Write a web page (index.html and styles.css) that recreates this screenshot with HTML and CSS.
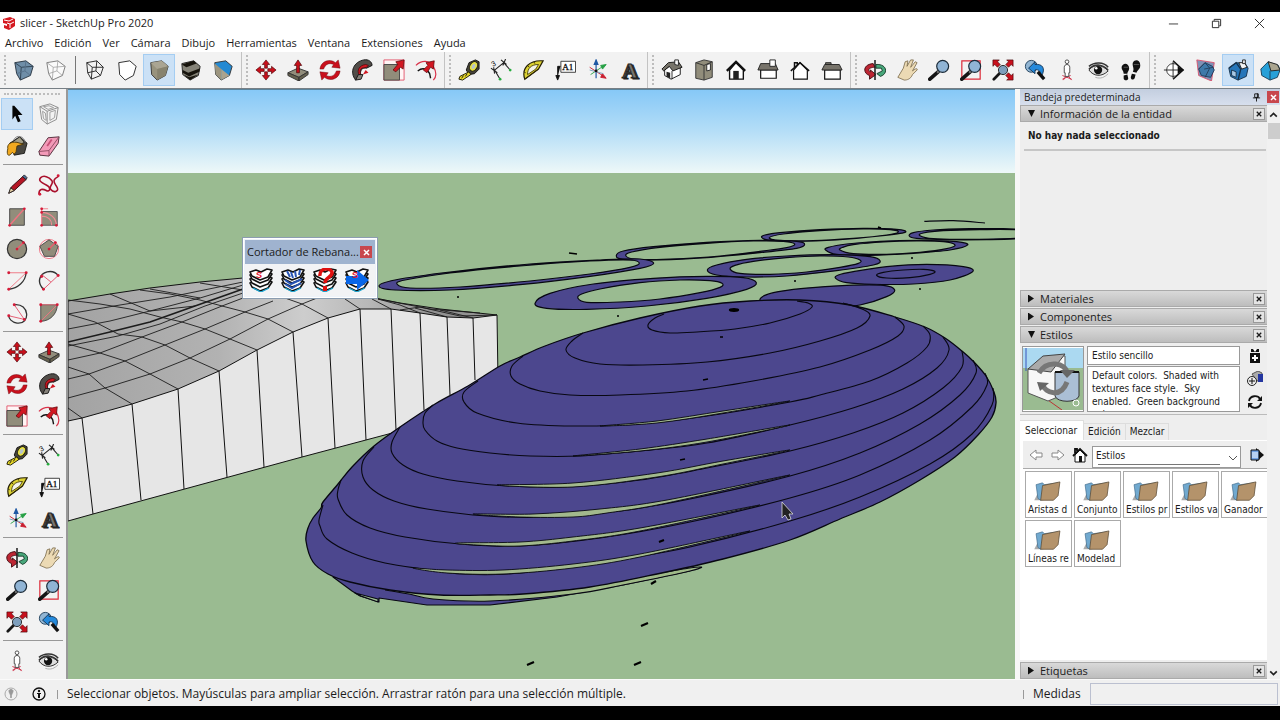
FILE: index.html
```html
<!DOCTYPE html>
<html lang="es">
<head>
<meta charset="utf-8">
<title>slicer - SketchUp Pro 2020</title>
<link rel="stylesheet" href="styles.css">
</head>
<body>
<svg class="defs" aria-hidden="true">
  <defs>
    <linearGradient id="sky" x1="0" y1="0" x2="0" y2="1"><stop offset="0" stop-color="#86c8f7"/><stop offset=".5" stop-color="#b5def7"/><stop offset="1" stop-color="#eef8f8"/></linearGradient>
    <linearGradient id="terrain" x1="0" y1="0" x2="1" y2="0"><stop offset="0" stop-color="#a3a3a3"/><stop offset=".35" stop-color="#b2b2b2"/><stop offset=".55" stop-color="#cdcdcd"/><stop offset=".7" stop-color="#b8b8b8"/><stop offset=".85" stop-color="#929292"/></linearGradient>

    <symbol id="i-xray" viewBox="0 0 24 24"><path d="M2 4l12-2 8 6-3 10-11 5-4-7z" fill="#6f8ea8" stroke="#26323e"/><path d="M2 4l7 5 13-1M9 9l-1 14" fill="none" stroke="#2f4252"/><path d="M14 2l-1 11-9 3M13 13l6 5" fill="none" stroke="#56718a"/></symbol>
    <symbol id="i-back" viewBox="0 0 24 24"><path d="M2 4l12-2 8 6-3 10-11 5-4-7z" fill="#fafafa" stroke="#777"/><path d="M2 4l7 5 13-1M9 9l-1 14M14 2l-1 11-9 3M13 13l6 5" fill="none" stroke="#999" stroke-width=".8"/></symbol>
    <symbol id="i-wire" viewBox="0 0 24 24"><path d="M3 4l11-2 7 7-3 9-10 4-4-7zM3 4l6 5 12 0M9 9l-1 13M14 2l-1 11-9 2M13 13l5 5" fill="none" stroke="#222"/></symbol>
    <symbol id="i-hidden" viewBox="0 0 24 24"><path d="M3 4l12-2 7 6-3 10-9 5-6-6z" fill="#fff" stroke="#222"/></symbol>
    <symbol id="i-shaded" viewBox="0 0 24 24"><path d="M3 4l12-2 7 6-3 10-9 5-6-6z" fill="#98937e" stroke="#333"/><path d="M3 4l12-2 7 6-12 3z" fill="#aaa593"/><path d="M10 11l12-3-3 10-9 5z" fill="#87836f"/></symbol>
    <symbol id="i-textured" viewBox="0 0 24 24"><path d="M2 5l13-3 7 6-2 10-9 5-8-6z" fill="#858378" stroke="#222"/><path d="M2 6l13-4 3 3-11 4zM3 12l6 3 13-5-1 4-11 5-7-4zM4 17l6 3 10-3-9 6z" fill="#17140d"/></symbol>
    <symbol id="i-mono" viewBox="0 0 24 24"><path d="M3 4l12-2 7 6-3 10-9 5-6-6z" fill="#2389d2" stroke="#333"/><path d="M3 5l7 6 0 12-6-6z" fill="#9c957f"/><path d="M10 11l9 7-9 5z" fill="#aaa38e"/></symbol>
    <symbol id="i-move" viewBox="0 0 24 24"><g fill="#c9101c" stroke="#4d0508" stroke-width=".7"><path id="mv" d="M12 1l4 5h-2.500v4h-3V6H8z"/><use href="#mv" transform="rotate(90 12 12)"/><use href="#mv" transform="rotate(180 12 12)"/><use href="#mv" transform="rotate(270 12 12)"/></g></symbol>
    <symbol id="i-push" viewBox="0 0 24 24"><path d="M1 15l11-5 11 4-10 6z" fill="#918d7b" stroke="#333"/><path d="M1 15v3l12 6v-4zM13 20l10-6v3l-10 7z" fill="#66624f" stroke="#333"/><path d="M12 1l4 6h-2.500v8h-3V7H8z" fill="#c9101c" stroke="#4d0508" stroke-width=".8"/></symbol>
    <symbol id="i-rotate" viewBox="0 0 24 24"><g fill="#c9101c" stroke="#6d0710" stroke-width=".5"><path id="rt" d="M1 11C2 2 12-1 18 4l3-3 2 9-9-1 2-3C12 4 7 5 5 11z"/><use href="#rt" transform="rotate(180 12 12)"/></g></symbol>
    <symbol id="i-follow" viewBox="0 0 24 24"><path d="M5 23C-2 14 3 3 14 1c5-1 9 2 9 6l-6 3c-5-1-8 3-6 8z" fill="#514d49" stroke="#111"/><path d="M9 18c-3-6 0-11 7-12l3 1-2 2-5 1c-3 2-2 5-1 8z" fill="#d11722" stroke="#4d0508" stroke-width=".8"/><path d="M16 12l3 3-6 2z" fill="#d11722"/><path d="M5 23l6-1 2-5-5 0z" fill="#85817a" stroke="#111"/></symbol>
    <symbol id="i-scale" viewBox="0 0 24 24"><path d="M1 1h22v22H1z" fill="#fff5f5" stroke="#e3536a"/><path d="M1 6h17v17H1z" fill="#918d7b" stroke="#444"/><path d="M11 12l5-6-2-3 9-2-1 10-3-2-5 5z" fill="#d11722" stroke="#5d0508" stroke-width=".8"/></symbol>
    <symbol id="i-offset" viewBox="0 0 24 24"><path d="M1 7C7 1 16 1 20 8s3 12 0 15" fill="none" stroke="#d9344b" stroke-width="1.300"/><path d="M3 13c5-4 10-3 13 3l1 5" fill="none" stroke="#111" stroke-width="1.500"/><path d="M9 12l5-5-2-3 9-2-1 9-3-2-4 6z" fill="#d11722" stroke="#5d0508" stroke-width=".8"/></symbol>
    <symbol id="i-tape" viewBox="0 0 24 24"><path d="M9 12l3-8 7-3 4 2v8l-5 5-6 1z" fill="#45423a" stroke="#111"/><ellipse cx="17" cy="8" rx="4" ry="5.500" transform="rotate(28 17 8)" fill="#e7e043" stroke="#24210a"/><ellipse cx="17" cy="8" rx="1.800" ry="3" transform="rotate(28 17 8)" fill="#b7c3cb"/><path d="M2 19l10-5 2 3-9 6-4-1z" fill="#e9d927" stroke="#181600"/><path d="M4 21l2-3M8 19l2-3" stroke="#111"/></symbol>
    <symbol id="i-dim" viewBox="0 0 24 24"><path d="M4 13L15 4M5 12l6 10M15 4l7 8M1 10l7 5M5 16l-1-7M12 1l6 5M17 0l-3 7" fill="none" stroke="#222" stroke-width="1.200"/><circle cx="11" cy="22" r="1.500" fill="#27ad3f"/><circle cx="22" cy="12" r="1.500" fill="#27ad3f"/><text x="2" y="8" class="dim-text" transform="rotate(-30 4 6)">3</text></symbol>
    <symbol id="i-protractor" viewBox="0 0 24 24"><path d="M3 22C-1 10 8 1 23 2L18 11z" fill="#dcd232" stroke="#251f05" stroke-width="1.300"/><path d="M6 17C6 10 10 6 18 6l-3 5z" fill="#f3f3ec" stroke="#4b4309"/><path d="M3 22l15-11M2 14l2 1M6 7l2 2M13 3l1 2" stroke="#322b07"/></symbol>
    <symbol id="i-text" viewBox="0 0 24 24"><path d="M7.500 2.500h16v12h-16z" fill="#fff" stroke="#333"/><path d="M7 8H4v11M2 18l2 5 2-5z" fill="#111" stroke="#111"/><text x="9" y="12" class="a1-text">A1</text></symbol>
    <symbol id="i-axes" viewBox="0 0 24 24"><path d="M11 21V5M9 6l2-5 2 5z" fill="#1f58a4" stroke="#1f58a4" stroke-width="1.300"/><path d="M5 17l12-8M16 7l6-1-4 5z" fill="#25a044" stroke="#25a044"/><path d="M4 9l14 9M18 16l4 5-6-1z" fill="#c91e2f" stroke="#c91e2f"/><path d="M4 12l15 4" stroke="#78a0bc"/><circle cx="11" cy="13" r="1.500" fill="#111"/></symbol>
    <symbol id="i-3d" viewBox="0 0 24 24"><text x="6" y="22" class="solid-back">A</text><text x="4" y="21" class="solid-front">A</text></symbol>
    <symbol id="i-iso" viewBox="0 0 24 24"><path d="M4 12l9-7 8 4v8l-10 5-7-4z" fill="#fff" stroke="#111"/><path d="M1 11l7-7 11-1 4 6-10 4-4-5-6 5z" fill="#77746a" stroke="#111"/><path d="M6 14l4 1v6l-4-2z" fill="#222"/><path d="M15 1h4v6l-4-1z" fill="#f9f9f9" stroke="#222"/><path d="M12 13v9" stroke="#222"/></symbol>
    <symbol id="i-top" viewBox="0 0 24 24"><path d="M3 4l9-3 9 2v17l-9 3-9-2z" fill="#918d7b" stroke="#333"/><path d="M3 4l9 3 9-4M12 7v16" fill="none" stroke="#333"/><path d="M15 6l4-1v7l-4 1z" fill="#fff" stroke="#222"/></symbol>
    <symbol id="i-front" viewBox="0 0 24 24"><path d="M5 12v10h15V12l-8-8z" fill="#fff" stroke="#111" stroke-width="1.500"/><path d="M2 13L12 3l10 10" fill="none" stroke="#111" stroke-width="2.500"/><path d="M9 13h6v9H9z" fill="#222"/></symbol>
    <symbol id="i-right" viewBox="0 0 24 24"><path d="M4 12h17v9H4z" fill="#fff" stroke="#111" stroke-width="1.300"/><path d="M1 12l3-7h16l3 7z" fill="#77736a" stroke="#222"/><path d="M14 1h6v7h-6z" fill="#fff" stroke="#222"/></symbol>
    <symbol id="i-rear" viewBox="0 0 24 24"><path d="M5 12v10h15V12l-8-8z" fill="#fff" stroke="#111" stroke-width="1.300"/><path d="M2 13L12 4l10 9M6 9V4h3v2" fill="none" stroke="#111" stroke-width="1.600"/></symbol>
    <symbol id="i-left" viewBox="0 0 24 24"><path d="M4 12h17v10H4z" fill="#fff" stroke="#111" stroke-width="1.300"/><path d="M1 12l3-6h16l3 6zM5 6V4h6v2" fill="#77736a" stroke="#222"/></symbol>
    <symbol id="i-orbit" viewBox="0 0 24 24"><path d="M13 6c12-1 14 10 5 13l-4-3 6-3-1-3-6 0z" fill="#48a77b" stroke="#153d2a"/><path d="M10 5C-2 6-1 16 6 18v4l7-5-6-5v2c-4-2-1-5 5-5z" fill="#bd2633" stroke="#430c12"/><path d="M12 1v22" stroke="#222" stroke-width="1.700"/></symbol>
    <symbol id="i-pan" viewBox="0 0 24 24"><path d="M2 20l6-10 2-7 3-1-1 6 4-7 3 0-3 8 5-6 2 1-5 9c3-3 6-3 5-1l-5 5c-2 5-6 6-9 6z" fill="#ecdab4" stroke="#7c6c4c" stroke-width=".9"/></symbol>
    <symbol id="i-zoom" viewBox="0 0 24 24"><path d="M2 22l9-8" stroke="#151515" stroke-width="4" stroke-linecap="round"/><path d="M10 15l3-3" stroke="#777" stroke-width="2"/><circle cx="16" cy="8" r="6.500" fill="#90b4d5" stroke="#1b2b39" stroke-width="1.300"/></symbol>
    <symbol id="i-window" viewBox="0 0 24 24"><path d="M2 2h20v20H2z" fill="none" stroke="#dc2a38" stroke-width="1.300"/><use href="#i-zoom" width="24" height="24"/></symbol>
    <symbol id="i-extents" viewBox="0 0 24 24"><path d="M2 22l8-8" stroke="#151515" stroke-width="3" stroke-linecap="round"/><circle cx="12" cy="12" r="5" fill="#7e9fbd" stroke="#222"/><g fill="#c9101c" stroke="#430508" stroke-width=".7"><path id="ext" d="M1 1h7L6 3l3 3-3 3-3-3-2 2z"/><use href="#ext" transform="rotate(90 12 12)"/><use href="#ext" transform="rotate(180 12 12)"/></g></symbol>
    <symbol id="i-previous" viewBox="0 0 24 24"><circle cx="8" cy="8" r="6.500" fill="#91b5d3" stroke="#21415c"/><path d="M5 10l7-7v3c8-1 12 4 7 13-1-6-3-8-7-7v4z" fill="#2489db" stroke="#153554"/><path d="M15 14l7 8" stroke="#111" stroke-width="3.500"/></symbol>
    <symbol id="i-camera" viewBox="0 0 24 24"><path d="M8 23l4-6 5 6M7 18l10 4M16 18l-9 4" fill="none" stroke="#cf3048"/><circle cx="12" cy="3" r="2" fill="#fff" stroke="#444"/><path d="M9 9c0-4 6-4 6 0v6h-1v4h-4v-4H9z" fill="#fff" stroke="#444"/></symbol>
    <symbol id="i-look" viewBox="0 0 24 24"><path d="M1 12C6 5 16 6 22 13c-7 7-16 6-21-1z" fill="#ddd" stroke="#222"/><path d="M1 8C7 3 17 3 22 9M1 11c6-6 14-6 21 1" fill="none" stroke="#333" stroke-width="1.600"/><circle cx="11" cy="12" r="4.500" fill="#111"/><circle cx="9" cy="10" r="1.400" fill="#fff"/><path d="M8 20c6 2 10 0 14-4" fill="none" stroke="#aaa"/></symbol>
    <symbol id="i-walk" viewBox="0 0 24 24"><g fill="#111"><path d="M2 8c2-5 8-3 8 2 0 3-2 4-2 6H4c0-4-3-4-2-8zM4 18l4-1 1 4c0 3-5 3-5 0zM14 4c3-5 9-2 8 4 0 3-3 4-4 7l-4-1c2-4-1-6 0-10zM13 16l4 1-1 4c-2 3-5 1-4-2z"/></g><path d="M4 9h5M15 6h6" stroke="#555"/></symbol>
    <symbol id="i-section" viewBox="0 0 24 24"><circle cx="11" cy="12" r="7" fill="#fff" stroke="#333"/><path d="M1 12h20M11 3v18" stroke="#222"/><path d="M11 2l11 10-11 10" fill="none" stroke="#111" stroke-width="1.500"/><path d="M16 8l7 4-7 4z" fill="#111"/></symbol>
    <symbol id="i-plane" viewBox="0 0 24 24"><path d="M2 1l19 3-3 20-14-6z" fill="#7f91b5" stroke="#da526c"/><path d="M4 11l7-7 8 4 2 4-4 8-10-2z" fill="#3f79a9" stroke="#213b5a"/><path d="M4 11l7-7 5 6-5 10M10 11l10-2" fill="none" stroke="#243f5c"/></symbol>
    <symbol id="i-cuts" viewBox="0 0 24 24"><path d="M2 10l8-6 10 1 3 5-2 9-9 4-8-4z" fill="#2676b9" stroke="#17324b"/><path d="M13 4h6l3 5-6 2z" fill="#f4f4f4" stroke="#222"/><path d="M5 12l5 2v6l-5-2z" fill="#a9c9e5" stroke="#17324b"/><path d="M2 10l8-6 5 7-3 12" fill="none" stroke="#17324b" stroke-width="1.500"/><path d="M17 1h3v4h-3z" fill="#eee" stroke="#222"/></symbol>
    <symbol id="i-fill" viewBox="0 0 24 24"><path d="M2 11l8-8 11 4 2 5-3 8-8 3-9-5z" fill="#27a0d8" stroke="#173d56"/><path d="M10 3l10 3 3 6-10 1z" fill="#aaa58f" stroke="#222"/><path d="M12 13v10" stroke="#173d56"/></symbol>

    <symbol id="i-select" viewBox="0 0 24 24"><path d="M9 3l9 10h-5l3 7-3 1-3-7-3 4V3z" fill="#050505"/></symbol>
    <symbol id="i-component" viewBox="0 0 24 24"><path d="M2 4l11-3 9 4-2 13-10 5-6-5zM2 4l8 5 12-4M10 9v14" fill="none" stroke="#888"/><path d="M5 9l3 2 1 8-3-2zM13 10l6-2-1 8-5 3z" fill="none" stroke="#999"/><path d="M6 4l6-1 5 2-6 2z" fill="none" stroke="#999"/></symbol>
    <symbol id="i-paint" viewBox="0 0 24 24"><path d="M4 9L15 2l8 7-3 11-11 2z" fill="#494741" stroke="#181815"/><path d="M5 9l10-7 5 6-9 5z" fill="#a19d88" stroke="#222"/><path d="M2 15c-1-5 3-8 10-7l7 2-7 2-1 6c-1 3-3 3-4 1l-3 3c-3 1-3-4-2-7z" fill="#f1a91f" stroke="#4d390c"/><path d="M8 6c4-8 12-4 13 2" fill="none" stroke="#777"/></symbol>
    <symbol id="i-eraser" viewBox="0 0 24 24"><path d="M1 18L11 3l12-1-1 7-10 14-10-1z" fill="#f39ab8" stroke="#4d2835"/><path d="M1 18l11-1L23 2M12 17v6" fill="none" stroke="#8b4b61"/><path d="M10 12l5-7" stroke="#c75077" stroke-width="2"/></symbol>
    <symbol id="i-pencil" viewBox="0 0 24 24"><path d="M3 21l3-7L18 3l4 3L9 18z" fill="#b51625" stroke="#30080c"/><path d="M18 3l2-2 3 3-1 2z" fill="#5373a2" stroke="#222"/><path d="M3 21l2-6 4 3z" fill="#e6d0a5" stroke="#222"/></symbol>
    <symbol id="i-free" viewBox="0 0 24 24"><path d="M1 22c0-6 4-6 8-4s6-3 0-6S0 7 3 4s9-1 12 3-4 6-1 10 9 2 7-2-5-6-3-9 4-2 4-4" fill="none" stroke="#a9102c" stroke-width="1.700"/><circle cx="2" cy="22" r="1.600" fill="#d41b39"/><circle cx="22" cy="2" r="1.600" fill="#d41b39"/></symbol>
    <symbol id="i-rect" viewBox="0 0 24 24"><path d="M4 3h16v18H4z" fill="#918d7b" stroke="#444"/><path d="M4 21L20 3" stroke="#ef7380" stroke-width="1.500"/><circle cx="4" cy="21" r="1.500" fill="#d41b39"/><circle cx="20" cy="3" r="1.500" fill="#d41b39"/></symbol>
    <symbol id="i-rrect" viewBox="0 0 24 24"><path d="M4 6h17v15H4z" fill="#918d7b" stroke="#555"/><path d="M4 2v19M4 3h7M4 7c9 0 16 6 16 14M4 11c7 0 11 4 11 10" fill="none" stroke="#f28994" stroke-width="1.300"/><g fill="#d41b39"><circle cx="4" cy="3" r="1.500"/><circle cx="4" cy="7" r="1.500"/><circle cx="4" cy="21" r="1.500"/><circle cx="20" cy="21" r="1.500"/></g></symbol>
    <symbol id="i-circle" viewBox="0 0 24 24"><circle cx="12" cy="12" r="10.500" fill="#918d7b" stroke="#333" stroke-width="1.300"/><path d="M12 12l7-7" stroke="#e95f6d" stroke-width="1.500"/><circle cx="12" cy="12" r="1.500" fill="#d41b39"/><circle cx="19" cy="5" r="1.500" fill="#d41b39"/></symbol>
    <symbol id="i-poly" viewBox="0 0 24 24"><circle cx="12" cy="12" r="10.500" fill="#fff5f5" stroke="#ec7180"/><path d="M12 2l10 7-4 11H7L2 9z" fill="#918d7b" stroke="#444"/><path d="M12 12l7-7" stroke="#e95f6d" stroke-width="1.500"/><circle cx="12" cy="12" r="1.500" fill="#d41b39"/><circle cx="19" cy="5" r="1.500" fill="#d41b39"/></symbol>
    <symbol id="i-arc" viewBox="0 0 24 24"><path d="M22 3c-1 10-9 17-19 18" fill="none" stroke="#333" stroke-width="1.400"/><path d="M3 3h19L3 21" fill="none" stroke="#ef7380"/><g fill="#d41b39"><circle cx="3" cy="3" r="1.600"/><circle cx="22" cy="3" r="1.600"/><circle cx="3" cy="21" r="1.600"/></g></symbol>
    <symbol id="i-arc2" viewBox="0 0 24 24"><path d="M6 21C-2 13 2 4 10 2c5-1 9 0 12 4" fill="none" stroke="#333" stroke-width="1.500"/><path d="M6 21L22 6M4 5l10 8" fill="none" stroke="#e3536a"/><g fill="#d41b39"><circle cx="4" cy="7" r="1.600"/><circle cx="22" cy="6" r="1.600"/><circle cx="6" cy="21" r="1.600"/></g></symbol>
    <symbol id="i-arc3" viewBox="0 0 24 24"><path d="M9 3c17-2 18 22 3 20C6 22 3 18 3 15" fill="none" stroke="#333" stroke-width="1.400"/><path d="M9 3l11 16L3 15" fill="none" stroke="#e3536a"/><g fill="#d41b39"><circle cx="9" cy="3" r="1.600"/><circle cx="20" cy="19" r="1.600"/><circle cx="3" cy="15" r="1.600"/></g></symbol>
    <symbol id="i-pie" viewBox="0 0 24 24"><path d="M3 3h18c0 10-8 18-18 18z" fill="#918d7b" stroke="#444"/><path d="M3 3h18L3 21" fill="none" stroke="#ef7380"/><g fill="#d41b39"><circle cx="3" cy="3" r="1.600"/><circle cx="21" cy="3" r="1.600"/><circle cx="3" cy="21" r="1.600"/></g></symbol>

    <symbol id="stack" viewBox="0 0 24 24"><g fill="#fff" stroke="#111" stroke-width="1.600" stroke-linejoin="round"><path id="sheet" d="M1 15l6-2 5 2 6-3 5 2-4 6-8 3-8-4z"/><use href="#sheet" y="-4"/><use href="#sheet" y="-8"/><path d="M1 4l6-2 5 2 6-3 5 1-4 7-8 3-8-4z"/></g><path d="M4 20l8 4 8-4" stroke="#1ca7d3" stroke-width="1.300" fill="none"/></symbol>
    <symbol id="folder" viewBox="0 0 30 24"><path d="M0 21l4-8 6 8z" fill="#aaa"/><path d="M2 4l7-2 2 2 15-2v5L7 21l-3-2z" fill="#71a9cf" stroke="#3b6687" stroke-width=".7"/><path d="M9 5l19-4-2 15-5 5H7z" fill="#b4936b" stroke="#594933" stroke-width=".8"/></symbol>
    <symbol id="close" viewBox="0 0 9 9"><path d="M2 2l5 5M7 2L2 7" fill="none" stroke="currentColor" stroke-width="1.500"/></symbol>
  </defs>
</svg>

<div class="window">
  <header class="titlebar">
    <svg class="app-logo" viewBox="0 0 14 14"><path d="M1 3l7-2 5 2v7l-6 4-5-2V9l3 1V8L1 7z" fill="#d51920"/><path d="M2 4l5 1 4-2M5 7l3 1v4M8 8l4-2" fill="none" stroke="#fff"/></svg>
    <h1 class="title">slicer - SketchUp Pro 2020</h1>
    <div class="window-controls">
      <button aria-label="Minimizar"><svg viewBox="0 0 12 12"><path d="M1 6.500h10" stroke="#333"/></svg></button>
      <button aria-label="Restaurar"><svg viewBox="0 0 12 12"><path d="M1.500 3.500h7v7h-7zM3.500 3V1.500h7v7H9" fill="none" stroke="#222"/></svg></button>
      <button aria-label="Cerrar"><svg viewBox="0 0 12 12"><path d="M1 1l10 10M11 1L1 11" stroke="#222"/></svg></button>
    </div>
  </header>
  <nav class="menubar" aria-label="Menú">
    <button>Archivo</button><button>Edición</button><button>Ver</button><button>Cámara</button><button>Dibujo</button><button>Herramientas</button><button>Ventana</button><button>Extensiones</button><button>Ayuda</button>
  </nav>

  <div class="toolbar">
    <div class="group">
      <button class="tool" aria-label="Rayos X"><svg><use href="#i-xray"/></svg></button><button class="tool" aria-label="Aristas posteriores"><svg><use href="#i-back"/></svg></button><span class="divider"></span><button class="tool" aria-label="Alámbrico"><svg><use href="#i-wire"/></svg></button><button class="tool" aria-label="Líneas ocultas"><svg><use href="#i-hidden"/></svg></button><button class="tool active" aria-label="Sombreado"><svg><use href="#i-shaded"/></svg></button><button class="tool" aria-label="Texturas"><svg><use href="#i-textured"/></svg></button><button class="tool" aria-label="Monocromo"><svg><use href="#i-mono"/></svg></button>
    </div>
    <div class="group">
      <button class="tool" aria-label="Mover"><svg><use href="#i-move"/></svg></button><button class="tool" aria-label="Empujar"><svg><use href="#i-push"/></svg></button><button class="tool" aria-label="Rotar"><svg><use href="#i-rotate"/></svg></button><button class="tool" aria-label="Sígueme"><svg><use href="#i-follow"/></svg></button><button class="tool" aria-label="Escala"><svg><use href="#i-scale"/></svg></button><button class="tool" aria-label="Equidistancia"><svg><use href="#i-offset"/></svg></button>
    </div>
    <div class="group">
      <button class="tool" aria-label="Medir"><svg><use href="#i-tape"/></svg></button><button class="tool" aria-label="Acotaciones"><svg><use href="#i-dim"/></svg></button><button class="tool" aria-label="Transportador"><svg><use href="#i-protractor"/></svg></button><button class="tool" aria-label="Texto"><svg><use href="#i-text"/></svg></button><button class="tool" aria-label="Ejes"><svg><use href="#i-axes"/></svg></button><button class="tool" aria-label="Texto 3D"><svg><use href="#i-3d"/></svg></button>
    </div>
    <div class="group">
      <button class="tool" aria-label="Isométrica"><svg><use href="#i-iso"/></svg></button><button class="tool" aria-label="Planta"><svg><use href="#i-top"/></svg></button><button class="tool" aria-label="Frontal"><svg><use href="#i-front"/></svg></button><button class="tool" aria-label="Derecha"><svg><use href="#i-right"/></svg></button><button class="tool" aria-label="Posterior"><svg><use href="#i-rear"/></svg></button><button class="tool" aria-label="Izquierda"><svg><use href="#i-left"/></svg></button>
    </div>
    <div class="group">
      <button class="tool" aria-label="Orbitar"><svg><use href="#i-orbit"/></svg></button><button class="tool" aria-label="Desplazar"><svg><use href="#i-pan"/></svg></button><button class="tool" aria-label="Zoom"><svg><use href="#i-zoom"/></svg></button><button class="tool" aria-label="Ventana de zoom"><svg><use href="#i-window"/></svg></button><button class="tool" aria-label="Ver modelo centrado"><svg><use href="#i-extents"/></svg></button><button class="tool" aria-label="Anterior"><svg><use href="#i-previous"/></svg></button><button class="tool" aria-label="Situar cámara"><svg><use href="#i-camera"/></svg></button><button class="tool" aria-label="Girar"><svg><use href="#i-look"/></svg></button><button class="tool" aria-label="Caminar"><svg><use href="#i-walk"/></svg></button>
    </div>
    <div class="group last">
      <button class="tool" aria-label="Plano de sección"><svg><use href="#i-section"/></svg></button><button class="tool" aria-label="Mostrar planos"><svg><use href="#i-plane"/></svg></button><button class="tool active" aria-label="Mostrar cortes"><svg><use href="#i-cuts"/></svg></button><button class="tool" aria-label="Mostrar relleno"><svg><use href="#i-fill"/></svg></button>
    </div>
  </div>

  <div class="workspace">
    <aside class="palette" aria-label="Herramientas">
      <div class="tools">
        <button class="tool active" aria-label="Seleccionar"><svg><use href="#i-select"/></svg></button><button class="tool" aria-label="Crear componente"><svg><use href="#i-component"/></svg></button>
        <button class="tool" aria-label="Pintar"><svg><use href="#i-paint"/></svg></button><button class="tool" aria-label="Borrar"><svg><use href="#i-eraser"/></svg></button>
      </div>
      <div class="tools">
        <button class="tool" aria-label="Línea"><svg><use href="#i-pencil"/></svg></button><button class="tool" aria-label="Mano alzada"><svg><use href="#i-free"/></svg></button>
        <button class="tool" aria-label="Rectángulo"><svg><use href="#i-rect"/></svg></button><button class="tool" aria-label="Rectángulo girado"><svg><use href="#i-rrect"/></svg></button>
        <button class="tool" aria-label="Círculo"><svg><use href="#i-circle"/></svg></button><button class="tool" aria-label="Polígono"><svg><use href="#i-poly"/></svg></button>
        <button class="tool" aria-label="Arco"><svg><use href="#i-arc"/></svg></button><button class="tool" aria-label="Arco por 2 puntos"><svg><use href="#i-arc2"/></svg></button>
        <button class="tool" aria-label="Arco por 3 puntos"><svg><use href="#i-arc3"/></svg></button><button class="tool" aria-label="Sector"><svg><use href="#i-pie"/></svg></button>
      </div>
      <div class="tools">
        <button class="tool" aria-label="Mover"><svg><use href="#i-move"/></svg></button><button class="tool" aria-label="Empujar"><svg><use href="#i-push"/></svg></button>
        <button class="tool" aria-label="Rotar"><svg><use href="#i-rotate"/></svg></button><button class="tool" aria-label="Sígueme"><svg><use href="#i-follow"/></svg></button>
        <button class="tool" aria-label="Escala"><svg><use href="#i-scale"/></svg></button><button class="tool" aria-label="Equidistancia"><svg><use href="#i-offset"/></svg></button>
      </div>
      <div class="tools">
        <button class="tool" aria-label="Medir"><svg><use href="#i-tape"/></svg></button><button class="tool" aria-label="Acotaciones"><svg><use href="#i-dim"/></svg></button>
        <button class="tool" aria-label="Transportador"><svg><use href="#i-protractor"/></svg></button><button class="tool" aria-label="Texto"><svg><use href="#i-text"/></svg></button>
        <button class="tool" aria-label="Ejes"><svg><use href="#i-axes"/></svg></button><button class="tool" aria-label="Texto 3D"><svg><use href="#i-3d"/></svg></button>
      </div>
      <div class="tools">
        <button class="tool" aria-label="Orbitar"><svg><use href="#i-orbit"/></svg></button><button class="tool" aria-label="Desplazar"><svg><use href="#i-pan"/></svg></button>
        <button class="tool" aria-label="Zoom"><svg><use href="#i-zoom"/></svg></button><button class="tool" aria-label="Ventana de zoom"><svg><use href="#i-window"/></svg></button>
        <button class="tool" aria-label="Ver modelo centrado"><svg><use href="#i-extents"/></svg></button><button class="tool" aria-label="Anterior"><svg><use href="#i-previous"/></svg></button>
      </div>
      <div class="tools">
        <button class="tool" aria-label="Situar cámara"><svg><use href="#i-camera"/></svg></button><button class="tool" aria-label="Girar"><svg><use href="#i-look"/></svg></button>
      </div>
    </aside>

    <main class="viewport">
      <svg class="scene" viewBox="68 90 947 589" preserveAspectRatio="xMinYMin slice" role="img" aria-label="Modelo">
        <path d="M0 90h1400v83H0z" fill="url(#sky)"/>
        <path d="M0 173h1400v800H0z" fill="#9abb91"/>
        <g stroke="#111" stroke-linejoin="round">
          <path d="M68 301L110 294 150 288 200 282 243 278 300 285 360 295 400 303 440 309 497 315 473 322 391 316 300 340 220 378 68 425z" fill="url(#terrain)"/>
          <path d="M68 421L82 418 132 404 178 389 219 371 257 350 293 332 328 318 360 309 391 309 420 313 447 317 473 318 497 315 498 380 396 432 302 457 93 514 68 521z" fill="#e6e6e6"/>
          <path d="M82 418L93 514M132 404L141 500M178 389L184 489M219 371L227 477M257 350L264 467M293 332L302 457M328 318L335 448M360 309L366 440M391 309L396 430M420 313L424 410M447 317L450 395M473 318L475 380" fill="none"/>
          <g fill="none" stroke="#1c1c1c" stroke-width=".9">
            <path d="M68 398L105 388 150 374 190 358 230 339 268 319 302 304 317 298"/>
            <path d="M68 379L89 374 125 361 165 345 205 329 245 312 273 301"/>
            <path d="M68 360L100 353 142 337 182 322 222 306 243 298"/>
            <path d="M68 342L110 332 150 322 195 306 243 289" stroke-width="1.600"/>
            <path d="M68 346L118 336 160 324 205 306 243 293M68 329L110 321 150 311 200 298 243 285M68 314L120 305 170 297 243 282"/>
            <path d="M257 350L230 339 205 329 182 322 160 317 130 309 100 304 68 300"/>
            <path d="M219 371L190 358 165 345 142 337 118 334 95 322 68 314"/>
            <path d="M178 389L150 374 125 361 100 353 68 344"/>
            <path d="M132 404L105 388 89 374 68 367M82 418L68 408"/>
            <path d="M293 332L268 319 245 312 222 306 200 300 170 294 140 290"/>
            <path d="M328 318L302 304 285 298M360 309L345 299M391 309L372 299M420 313L400 305 378 299M447 317L415 308M473 318L440 310M378 299L430 309 480 313M400 310L420 307 460 316 497 315"/>
            <path d="M110 294L150 311 195 306M150 289L200 298M200 283L243 290"/>
          </g>
        </g>
        <g id="model"></g>
        <g fill="none" stroke="#000">
          <path d="M569 253l8 1M617 316h2M720 337h3M703 380l5-1M680 460l5-1M457 297h2M794 281h2M911 258h2M919 289h2M878 227l3 1" stroke-width="1.600"/>
          <path d="M659 542l5-2M651 584l5-3M641 626l7-3M634 665l7-3M527 665l7-3" stroke-width="2.200"/>
          <ellipse cx="734" cy="310" rx="4" ry=".7" stroke-width="2.400"/>
        </g>
        <path d="M782 502v16l3-3 3 5 3-1-2-5h4z" fill="#222" stroke="#ddd" stroke-width=".8"/>
      </svg>

      <section class="floating" aria-label="Cortador de Rebanadas">
        <header class="floating-title"><span>Cortador de Rebana...</span><button class="close-red" aria-label="Cerrar"><svg><use href="#close"/></svg></button></header>
        <div class="floating-tools">
          <button class="tool" aria-label="Rebanar"><svg viewBox="0 0 24 24"><use href="#stack"/><text x="7" y="10" class="s-text">S</text></svg></button>
          <button class="tool" aria-label="Rebanar otra vez"><svg viewBox="0 0 24 24"><use href="#stack"/><path d="M6 3l3 6M10 4l2 6M14 3l1 6M19 2l-1 5M4 12l6 4 11-5M4 16l7 4 9-5" fill="none" stroke="#2854b4" stroke-width="2"/></svg></button>
          <button class="tool" aria-label="Ayuda"><svg viewBox="0 0 24 24"><use href="#stack"/><path d="M7 8C6 0 17-1 19 4c1 5-7 5-7 11" fill="none" stroke="#df1010" stroke-width="3.500"/><path d="M10 18h4v5h-4z" fill="#df1010"/></svg></button>
          <button class="tool" aria-label="Exportar"><svg viewBox="0 0 24 24"><use href="#stack"/><path d="M1 8h11V2l12 10-12 10v-6H1z" fill="#0866e8"/><text x="7" y="10" class="s-text">S</text></svg></button>
        </div>
      </section>
    </main>

    <aside class="tray">
      <header class="tray-title"><h2>Bandeja predeterminada</h2><button class="pin" aria-label="Fijar"><svg viewBox="0 0 10 10"><path d="M3 1.500h4v4H3zM6 1v5M1 6h8M5 6v4" fill="none" stroke="#111"/></svg></button><button class="close-red" aria-label="Cerrar bandeja"><svg><use href="#close"/></svg></button></header>
      <div class="tray-body">
        <div class="panels">
          <div class="panel-head"><button class="fold open">Información de la entidad</button><button class="panel-close" aria-label="Cerrar"><svg><use href="#close"/></svg></button></div>
          <div class="entity"><p>No hay nada seleccionado</p></div>
          <div class="panel-head"><button class="fold">Materiales</button><button class="panel-close" aria-label="Cerrar"><svg><use href="#close"/></svg></button></div>
          <div class="panel-head"><button class="fold">Componentes</button><button class="panel-close" aria-label="Cerrar"><svg><use href="#close"/></svg></button></div>
          <div class="panel-head"><button class="fold open">Estilos</button><button class="panel-close" aria-label="Cerrar"><svg><use href="#close"/></svg></button></div>
          <div class="style-info">
            <button class="preview" aria-label="Actualizar estilo"><svg viewBox="0 0 60 62"><path d="M0 0h60v20H0z" fill="#abd9f1"/><path d="M0 20h60v42H0z" fill="#9abb91"/><path d="M3 0v23" fill="none" stroke="#3654bd"/><path d="M22 50l17 12" fill="none" stroke="#b33"/><path d="M5 21l14-4 17-10 6 1v38l-17 7L5 45z" fill="#f7f7f7" stroke="#555"/><path d="M5 21L20 8l22-2-14 18z" fill="#aaa" stroke="#444"/><path d="M32 24v24c2 7 22 7 24 0V24z" fill="#abbfd5" stroke="#333"/><path d="M32 24h24" stroke="#111" stroke-width="2"/><path d="M16 25c8-14 27-10 28 0M44 34c-6 16-21 12-25 2" fill="none" stroke="#777" stroke-width="5"/><path d="M37 22h15l-8 8zM14 34l12 1-9 8z" fill="#666"/><circle cx="53" cy="55" r="3" fill="#9abb91" stroke="#fff"/></svg></button>
            <div class="style-fields"><input aria-label="Nombre del estilo" value="Estilo sencillo"><textarea aria-label="Descripción" spellcheck="false">Default colors.  Shaded with
textures face style.  Sky
enabled.  Green background
color.</textarea></div>
            <div class="style-actions">
              <button aria-label="Mostrar panel secundario"><svg viewBox="0 0 16 16"><path d="M4 1h8v3H4zM3 5h10v10H3z" fill="#111"/><path d="M6 1h4L8 4zM7 7h2v2h2v2H9v2H7v-2H5V9h2z" fill="#fff"/></svg></button>
              <button aria-label="Crear estilo"><svg viewBox="0 0 16 16"><path d="M5 3l6-3 4 2v7l-5 1z" fill="#aaa" stroke="#555"/><path d="M11 3h5v8h-5z" fill="#2436a0"/><circle cx="5" cy="10" r="4.500" fill="#eee" stroke="#222"/><path d="M5 7v6M2 10h6" stroke="#111"/></svg></button>
              <button aria-label="Actualizar"><svg viewBox="0 0 16 16"><path d="M2 7c1-6 9-6 11-2M14 9c-1 6-9 6-11 2" fill="none" stroke="#111" stroke-width="1.800"/><path d="M15 2v5h-5zM1 14V9h5z" fill="#111"/></svg></button>
            </div>
          </div>
          <div class="tabs" role="tablist"><button role="tab" aria-selected="true" class="tab current">Seleccionar</button><button role="tab" class="tab">Edición</button><button role="tab" class="tab">Mezclar</button></div>
          <div class="browser">
            <div class="browser-bar">
              <button aria-label="Atrás"><svg viewBox="0 0 16 16"><path d="M2 8l6-5v3h6v4H8v3z" fill="#fff" stroke="#888"/></svg></button>
              <button aria-label="Adelante"><svg viewBox="0 0 16 16"><path d="M14 8L8 3v3H2v4h6v3z" fill="#fff" stroke="#888"/></svg></button>
              <button aria-label="En el modelo"><svg viewBox="0 0 16 16"><path d="M3 8v7h10V8L8 3z" fill="#fff" stroke="#111"/><path d="M1 9l7-7 7 7M3 6V2h2v2" fill="none" stroke="#111" stroke-width="1.800"/><path d="M7 9h3v6H7z" fill="#111"/></svg></button>
              <div class="combo"><select aria-label="Colección"><option>Estilos</option></select><svg viewBox="0 0 10 10"><path d="M1 3l4 4 4-4" fill="none" stroke="#555"/></svg></div>
              <button aria-label="Detalles"><svg viewBox="0 0 16 16"><path d="M7 1l8 7-8 7z" fill="#111"/><path d="M2 3h8v10H2z" fill="#6fa1e4" stroke="#111"/><path d="M3 6h6M3 8h6M3 10h6" stroke="#fff"/></svg></button>
            </div>
            <div class="folders">
              <button class="folder"><svg><use href="#folder"/></svg><span>Aristas d</span></button><button class="folder"><svg><use href="#folder"/></svg><span>Conjunto</span></button><button class="folder"><svg><use href="#folder"/></svg><span>Estilos pr</span></button><button class="folder"><svg><use href="#folder"/></svg><span>Estilos va</span></button><button class="folder"><svg><use href="#folder"/></svg><span>Ganador</span></button>
              <button class="folder"><svg><use href="#folder"/></svg><span>Líneas re</span></button><button class="folder"><svg><use href="#folder"/></svg><span>Modelad</span></button>
            </div>
          </div>
          <div class="panel-head tail"><button class="fold">Etiquetas</button><button class="panel-close" aria-label="Cerrar"><svg><use href="#close"/></svg></button></div>
        </div>
        <div class="scroll" aria-hidden="true"><svg viewBox="0 0 10 10"><path d="M2 7l3-3 3 3" fill="none" stroke="#222" stroke-width="1.500"/></svg><span class="thumb"></span><svg class="down" viewBox="0 0 10 10"><path d="M2 3l3 3 3-3" fill="none" stroke="#222" stroke-width="1.500"/></svg></div>
      </div>
    </aside>
  </div>

  <footer class="status">
    <button aria-label="Geolocalización"><svg viewBox="0 0 14 14"><circle cx="7" cy="7" r="6" fill="none" stroke="#aaa"/><path d="M5 4c0-2 4-2 4 0 0 2-2 3-2 7 0-4-2-5-2-7z" fill="#999" stroke="#999"/></svg></button>
    <button aria-label="Créditos"><svg viewBox="0 0 14 14"><circle cx="7" cy="7" r="6" fill="none" stroke="#111" stroke-width="1.300"/><circle cx="7" cy="4" r="1.200" fill="#111"/><path d="M5 6h4v1H8v4H6V7H5z" fill="#111"/></svg></button>
    <span class="tick"></span>
    <p>Seleccionar objetos. Mayúsculas para ampliar selección. Arrastrar ratón para una selección múltiple.</p>
    <div class="measure"><span class="tick"></span><label for="medidas">Medidas</label><input id="medidas"></div>
  </footer>
</div>
<script src="script.js"></script>
</body>
</html>
```
FILE: styles.css
```css
*, *::before, *::after { box-sizing: border-box; }
body {
  margin: 0;
  height: 100vh;
  padding: 12px 0 14px;
  background: #000;
  overflow: hidden;
  color: #1b1b1b;
  font: 11px/16px "Open Sans", "Noto Sans", sans-serif;
}
button, input, textarea, select { font: inherit; color: inherit; margin: 0; padding: 0; border: 0; border-radius: 0; background: none; }
button { display: flex; align-items: center; justify-content: center; flex: none; }
h1, h2, p { margin: 0; font-size: inherit; font-weight: 400; }
svg { display: block; flex: none; }
.defs { position: absolute; width: 0; height: 0; }
.window { display: flex; flex-direction: column; height: 100%; background: #f0f0f0; }

.titlebar { display: flex; align-items: center; height: 22px; padding-left: 2px; background: #fff; flex: none; }
.app-logo { width: 14px; height: 14px; }
.title { flex: 1; padding-left: 4px; }
.window-controls { display: flex; gap: 19px; padding-right: 9px; }
.window-controls button { width: 24px; height: 20px; }
.window-controls svg { width: 11px; height: 11px; }
.menubar { display: flex; gap: 11px; height: 18px; padding: 0 5px; background: #fff; flex: none; }

.toolbar { display: flex; height: 37px; flex: none; overflow: hidden; background: #f2f2f2; border-bottom: 1px solid #777f85; }
.group { display: flex; align-items: center; flex: none; padding: 0 2px 0 4px; border-right: 1px solid #c3c3c3; }
.group::before { content: ""; width: 2px; height: 30px; margin-right: 2px; border-left: 2px dotted #bdbdbd; }
.last { border-right: 0; }
.divider { width: 1px; height: 28px; margin: 0 3px; background: #777; }
.tool { width: 32px; height: 32px; }
.tool svg { width: 22px; height: 22px; }
.active { background: #cbe1f6; outline: 1px solid #a4cdf2; outline-offset: -1px; }
.dim-text { font: 8px "Liberation Sans", sans-serif; }
.a1-text { font: 10px "Liberation Serif", serif; stroke: #111; stroke-width: 0.3px; }
.solid-back { font: bold 24px "Liberation Serif", serif; fill: #333; stroke: #222; }
.solid-front { font: bold 24px "Liberation Serif", serif; fill: #77746e; stroke: #222; }
.s-text { font: bold 9px "Liberation Sans", sans-serif; fill: #e3102b; }

.workspace { display: flex; flex: 1; min-height: 0; }
.palette { width: 68px; flex: none; padding: 9px 3px 0 1px; border-right: 2px solid #999; overflow: hidden; background: #f2f2f2; }
.palette::before { content: ""; display: block; height: 2px; margin: -5px 3px 3px; border-top: 2px dotted #bdbdbd; }
.tools { display: grid; grid-template-columns: 32px 32px; }
.tools + .tools::before { content: ""; grid-column: 1 / -1; height: 1px; margin: 2px 2px 4px; background: #999; }

.viewport { position: relative; flex: 1; min-width: 0; border-top: 1px solid #59849c; }
.scene { width: 100%; height: 100%; }
.floating { position: absolute; left: 174px; top: 147px; width: 136px; padding: 2px; border: 1px solid #8c9db0; background: #edf3fa; box-shadow: inset 0 0 0 1px #fff; }
.floating-title { display: flex; align-items: center; justify-content: space-between; height: 24px; padding: 0 3px 0 2px; background: #9fb3cf; white-space: nowrap; }
.close-red { width: 12px; height: 12px; color: #fff; background: #c8474d; }
.close-red svg { width: 9px; height: 9px; }
.panel-close svg { width: 8px; height: 8px; }
.floating-tools { display: flex; background: #f2f3f5; }
.floating-tools .tool svg { width: 24px; height: 24px; }

.tray { display: flex; flex-direction: column; width: 265px; flex: none; border-left: 5px solid #f7f7f7; background: #eee; }
.tray-title { display: flex; align-items: center; height: 16px; flex: none; padding: 0 1px 0 4px; background: linear-gradient(#c3cedf, #d7dfed); font-size: 10px; }
.tray-title h2 { flex: 1; }
.pin { width: 12px; margin-right: 5px; }
.pin svg { width: 9px; height: 10px; }
.tray-body { display: flex; flex: 1; min-height: 0; }
.panels { display: flex; flex-direction: column; flex: 1; min-width: 0; }
.panel-head { display: flex; align-items: center; height: 17px; flex: none; margin-bottom: 1px; padding: 0 2px 0 7px; border: 1px solid #aaa; border-right: 0; background: linear-gradient(#d9d9d9, #bdbdbd); }
.fold { flex: 1; justify-content: flex-start; gap: 5px; line-height: 15px; }
.fold::before { content: ""; width: 6px; height: 8px; margin-right: 1px; background: #111; clip-path: polygon(0 0, 100% 50%, 0 100%); }
.fold.open::before { width: 7px; height: 7px; margin-right: 0; clip-path: polygon(0 0, 100% 0, 50% 100%); }
.panel-close { width: 12px; height: 12px; border: 1px solid #999; background: #e4e4e4; }
.entity { height: 167px; flex: none; margin: 0 1px 0 4px; }
.entity p { padding: 6px 4px; border-bottom: 2px solid #c6c6c6; font: bold 10px/14px "DejaVu Sans Condensed", "DejaVu Sans", sans-serif; }
.style-info, .tabs, .browser { font: 10px/12px "DejaVu Sans Condensed", "DejaVu Sans", sans-serif; }
.style-info { display: flex; gap: 3px; height: 71px; flex: none; padding: 2px 4px 2px 2px; border-bottom: 1px solid #bbb; }
.preview { width: 62px; height: 66px; border: 1px solid #999; background: #fff; }
.preview svg { width: 60px; height: 62px; }
.style-fields { display: flex; flex-direction: column; gap: 1px; flex: 1; min-width: 0; }
.style-fields input { height: 19px; padding: 0 4px; border: 1px solid #999; background: #fff; }
.style-fields textarea { display: block; height: 47px; padding: 2px 4px; border: 1px solid #999; background: #fff; line-height: 13px; resize: none; overflow: hidden; white-space: pre; }
.style-actions { display: flex; flex-direction: column; gap: 7px; padding: 2px 0 0 4px; }
.style-actions svg { width: 16px; height: 16px; }
.tabs { display: flex; align-items: flex-end; height: 25px; flex: none; }
.tab { height: 17px; padding: 0 4px; border: 1px solid #ddd; border-left: 0; border-bottom: 0; }
.current { height: 20px; padding: 0 6px 0 5px; background: #fff; }
.browser { flex: 1; min-height: 0; background: #fff; border-top: 1px solid #fff; overflow: hidden; }
.browser-bar { display: flex; align-items: center; gap: 6px; height: 28px; margin-left: 3px; padding: 0 2px 0 5px; background: #eee; border-bottom: 1px solid #aaa; }
.browser-bar svg { width: 16px; height: 16px; }
.combo { position: relative; flex: 1; margin: 4px 2px 0 -2px; height: 22px; border: 1px solid #999; background: #fff; }
.combo select { width: 100%; height: 19px; padding: 0 3px; appearance: none; }
.combo::after { content: ""; display: block; height: 1px; margin: -2px 20px 0 5px; background: #777; }
.combo svg { position: absolute; right: 2px; top: 6px; width: 10px; height: 10px; }
.folders { display: grid; grid-template-columns: repeat(5, 47px); gap: 2px; padding: 2px 0 0 5px; }
.folder { flex-direction: column; align-items: stretch; justify-content: flex-end; height: 47px; border: 1px solid #aaa; background: #fff; }
.folder svg { width: 28px; height: 22px; margin-left: 8px; }
.folder span { padding: 0 2px; line-height: 14px; text-align: left; white-space: nowrap; }
.tail { margin: 2px 0 0; }
.scroll { display: flex; flex-direction: column; align-items: center; width: 13px; flex: none; padding-top: 4px; background: #f1f1f1; }
.scroll svg { width: 11px; height: 11px; }
.thumb { width: 12px; height: 16px; margin-top: 3px; background: #cdcdcd; }
.scroll .down { margin-top: auto; }

.status { display: flex; align-items: center; height: 27px; flex: none; border-top: 1px solid #fafafa; padding: 2px 0 0 4px; background: #f0f0f0; font-size: 12px; }
.status svg { width: 14px; height: 14px; }
.status > button + button { margin-left: 14px; }
.tick { width: 1px; height: 9px; margin: 0 9px 0 11px; background: #999; }
.status p { flex: 1; white-space: nowrap; }
.measure { display: flex; align-items: center; width: 268px; height: 100%; }
.measure label { flex: 1; }
.measure input { width: 188px; height: 22px; margin-right: 2px; border: 1px solid #bbc0d0; }
```
FILE: script.js
```js
const NS = "http://www.w3.org/2000/svg";
const model = document.getElementById("model");
const BLUE = "#4c478e";

// Catmull-Rom spline through a flat list of coordinates.
function spline(flat, closed) {
  const p = [];
  for (let i = 0; i < flat.length; i += 2) p.push([flat[i], flat[i + 1]]);
  const n = p.length;
  const at = i => closed ? p[(i + n) % n] : p[Math.max(0, Math.min(n - 1, i))];
  let d = "M" + p[0].join(" ");
  for (let i = 0; i < (closed ? n : n - 1); i++) {
    const [a, b, c, e] = [at(i - 1), at(i), at(i + 1), at(i + 2)];
    d += `C${b[0] + (c[0] - a[0]) / 6} ${b[1] + (c[1] - a[1]) / 6} ${c[0] - (e[0] - b[0]) / 6} ${c[1] - (e[1] - b[1]) / 6} ${c[0]} ${c[1]}`;
  }
  return d + (closed ? "Z" : "");
}
function draw(d, fill, width = 1.1, parent = model) {
  const el = document.createElementNS(NS, "path");
  el.setAttribute("d", d);
  el.setAttribute("fill", fill);
  el.setAttribute("fill-rule", "evenodd");
  el.setAttribute("stroke", "#080812");
  el.setAttribute("stroke-width", width);
  el.setAttribute("stroke-linejoin", "round");
  parent.appendChild(el);
}

// Flat rings laid out behind the dome, on a finer grid.
const rings = document.createElementNS(NS, "g");
rings.setAttribute("transform", "translate(520 200) scale(.33333)");
model.appendChild(rings);
[
  [[725,112,745,120,830,124,950,120,1080,108,1155,97,1130,88,1030,85,900,89,780,98,735,105],
   [748,113,780,121,880,122,1000,115,1100,105,1135,96,1110,89,1030,87,900,92,790,102]],
  [[1168,108,1190,115,1280,119,1400,119,1500,116,1600,105,1580,92,1450,86,1350,86,1240,90,1180,98],
   [1200,107,1240,116,1330,118,1500,114,1570,104,1500,90,1380,89,1270,92,1210,99]],
  [[289,167,310,178,420,180,560,173,720,158,830,145,854,133,830,124,720,121,560,127,400,140,310,153],
   [318,168,350,178,450,177,600,168,720,154,800,143,824,132,790,124,700,123,560,130,420,142,335,156]],
  [[917,150,950,163,1050,166,1180,160,1290,150,1343,135,1310,125,1200,121,1080,124,980,132,925,142],
   [960,150,1000,161,1100,163,1200,157,1280,146,1305,135,1270,125,1190,123,1090,126,1000,134,968,142]],
  [[562,210,590,225,680,231,800,228,950,212,1060,195,1080,182,1050,170,940,164,800,168,680,178,590,195],
   [631,208,660,220,750,223,860,216,960,202,1015,190,1020,180,985,171,900,168,800,173,700,184,645,196]],
  [[45,310,80,325,200,328,380,318,560,295,680,268,709,248,670,233,560,229,400,235,220,252,90,280],
   [174,295,200,307,300,306,420,297,540,278,600,262,606,250,570,242,480,240,360,248,240,267,185,282]],
  [[-423,258,-375,270,-210,270,0,254,210,229,360,205,401,190,360,177,240,180,30,192,-210,216,-375,240],
   [-369,252,-330,264,-180,261,30,243,210,222,330,202,358,190,330,180,210,183,0,198,-210,219,-345,240]],
].forEach(([outer, inner]) => draw(spline(outer, true) + spline(inner, true), BLUE, 3.6, rings));
draw(spline([947,235,980,248,1060,253,1180,252,1290,240,1358,215,1330,200,1220,193,1100,200,1000,215,955,225], true), BLUE, 3.6, rings);
draw(spline([1070,226,1100,234,1170,233,1230,223,1244,214,1210,208,1150,210,1090,217], true), "none", 3.6, rings);
draw(spline([720,298,760,278,850,265,980,256,1090,256,1124,270,1100,290,1020,315,900,330,750,330], true), BLUE, 3.6, rings);
draw(spline([1213,64,1300,62,1395,69]), "none", 3.6, rings);

// Lowest slice, the opening above it and the dome silhouette.
draw("M333 577L352 591 360 596 379 602 379 598 427 605 490 605 557 597 623 585 690 571 600 575 400 585z", BLUE);
draw("M355 593L378 599 378 602 361 596z", "#9abb91");
draw(spline([385,590,409,594,433,599,490,601,573,594,623,585,690,571,690,568,573,586,440,590]), "#9fba88");
draw(spline([306,541,308,528,313,518,321,508,323,502,338,484,352,467,374,446,400,427,435,404,468,386,500,366,520,357,545,346,583,333,640,318,700,306,750,301,800,300,850,305,895,317,925,327,945,338,962,351,974,362,986,376,994,392,996,403,992,417,978,435,955,457,920,480,880,502,840,519,790,540,723,559,657,574,590,587,523,594,490,595,440,595,390,590,350,582,328,574,313,562], true), BLUE, 1.3);

[
  [664,314,655,318,648,325,652,330,670,333,697,332,735,329,770,323,800,314,812,307,808,303,797,301],
  [583,333,572,341,566,350,575,358,600,364,643,365,707,362,770,353,820,341,857,328,870,316,862,309,843,303],
  [523,356,512,366,511,376,520,384,540,391,570,395,620,395,687,391,753,381,820,367,870,350,898,336,904,326,895,317],
  [478,381,464,392,464,402,477,413,517,423,573,426,640,424,707,416,790,402,820,395,870,381,907,363,927,347,930,335,923,326],
  [433,405,425,413,423,422,425,430,437,441,457,448,490,453,530,456,580,456,640,451,707,443,790,425,853,408,903,389,937,368,949,350,943,337],
  [400,427,392,442,392,453,403,465,423,474,457,481,507,486,567,487,640,480,707,468,790,451,853,433,903,413,943,388,962,367,962,351],
  [374,447,363,461,363,477,373,490,394,501,427,509,487,516,550,517,620,511,690,499,790,476,860,453,920,424,960,395,976,373,973,360],
  [341,480,338,490,338,499,347,515,370,528,405,537,460,544,520,546,600,538,690,522,790,498,860,475,930,440,972,407,987,385,985,373],
  [323,505,319,520,320,526,327,539,352,553,385,563,423,569,463,574,507,574,573,567,623,559,690,547,790,521,860,497,930,464,972,434,992,405,993,388],
].forEach(c => draw(spline(c), "none"));

// Thin openings between consecutive slices, tapering at both ends.
[
  [600,426,657,421,723,411,790,401,723,413,657,423],
  [573,456,640,449,707,439,790,425,707,442,640,451],
  [497,485,573,483,657,473,723,461,790,450,723,464,657,477,573,487],
  [473,514,533,514,600,509,667,500,790,475,667,503,607,513,573,517,520,517],
  [457,543,520,542,573,537,640,528,760,505,640,531,573,541,520,546,477,545],
  [413,568,447,570,503,570,573,564,640,554,750,531,640,557,573,568,503,574,447,573],
].forEach(c => draw(spline(c, true), "#a2b98d", 0.9));
```
